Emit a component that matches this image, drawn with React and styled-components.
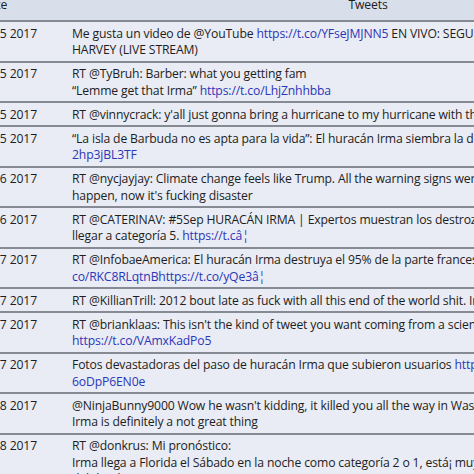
import React from "react";
import styled, { createGlobalStyle } from "styled-components";

const GlobalStyle = createGlobalStyle`
  html, body {
    margin: 0;
    padding: 0;
    background: #e9ecf4;
    overflow: hidden;
  }
`;

const Wrapper = styled.div`
  width: 474px;
  height: 474px;
  overflow: hidden;
  background: #e9ecf4;
  font-family: "Open Sans", "Noto Sans", sans-serif;
  font-size: 12.2px;
  letter-spacing: -0.15px;
  color: #1d1d22;
`;

const Table = styled.table`
  border-collapse: collapse;
  margin-left: -40px;
  margin-top: -3px;
  width: 710px;
  table-layout: fixed;
`;

const HeadRow = styled.tr`
  background: #d9dfea;
  border-bottom: 2px solid #868a93;
`;

const HeadCell = styled.th`
  box-sizing: border-box;
  font-weight: normal;
  line-height: 16px;
  padding: 0 6px 7px;
  padding-left: ${(p) => p.$padLeft || 6}px;
  text-align: ${(p) => p.$align || "center"};
  width: ${(p) => p.$width}px;
  white-space: nowrap;
  overflow: hidden;
`;

const Row = styled.tr`
  border-bottom: 2px solid #868a93;
`;

const DateCell = styled.td`
  vertical-align: top;
  padding: 3.5px 6px 2px 9.5px;
  line-height: 16.5px;
  white-space: nowrap;
  overflow: hidden;
`;

const TweetCell = styled.td`
  vertical-align: top;
  padding: 3.5px 6px 2px;
  line-height: 16.5px;
  white-space: nowrap;
  overflow: hidden;
`;

const Link = styled.span`
  color: #2b36b8;
`;

const rows = [
  {
    date: "Sep 05 2017",
    lines: [
      ["Me gusta un video de @YouTube ", { l: "https://t.co/YFseJMJNN5" }, " EN VIVO: SEGUIMIENTO DEL HURACÁN"],
      ["HARVEY (LIVE STREAM)"],
    ],
  },
  {
    date: "Sep 05 2017",
    lines: [
      ["RT @TyBruh: Barber: what you getting fam"],
      ["“Lemme get that Irma” ", { l: "https://t.co/LhjZnhhbba" }],
    ],
  },
  {
    date: "Sep 05 2017",
    lines: [["RT @vinnycrack: y'all just gonna bring a hurricane to my hurricane with these clouds"]],
  },
  {
    date: "Sep 05 2017",
    lines: [
      ["“La isla de Barbuda no es apta para la vida”: El huracán Irma siembra la destrucción ", { l: "https://t.co/" }],
      [{ l: "2hp3jBL3TF" }],
    ],
  },
  {
    date: "Sep 06 2017",
    lines: [
      ["RT @nycjayjay: Climate change feels like Trump. All the warning signs were there and we let it"],
      ["happen, now it's fucking disaster"],
    ],
  },
  {
    date: "Sep 06 2017",
    lines: [
      ["RT @CATERINAV: #5Sep HURACÁN IRMA | Expertos muestran los destrozos que podría causar al"],
      ["llegar a categoría 5. ", { l: "https://t.câ¦" }],
    ],
  },
  {
    date: "Sep 07 2017",
    lines: [
      ["RT @InfobaeAmerica: El huracán Irma destruya el 95% de la parte francesa de la isla ", { l: "https://t." }],
      [{ l: "co/RKC8RLqtnBhttps://t.co/yQe3â¦" }],
    ],
  },
  {
    date: "Sep 07 2017",
    lines: [["RT @KillianTrill: 2012 bout late as fuck with all this end of the world shit. Irma"]],
  },
  {
    date: "Sep 07 2017",
    lines: [
      ["RT @brianklaas: This isn't the kind of tweet you want coming from a scientist studying"],
      [{ l: "https://t.co/VAmxKadPo5" }],
    ],
  },
  {
    date: "Sep 07 2017",
    lines: [
      ["Fotos devastadoras del paso de huracán Irma que subieron usuarios ", { l: "https://t.co/" }],
      [{ l: "6oDpP6EN0e" }],
    ],
  },
  {
    date: "Sep 08 2017",
    lines: [
      ["@NinjaBunny9000 Wow he wasn't kidding, it killed you all the way in Washington"],
      ["Irma is definitely a not great thing"],
    ],
  },
  {
    date: "Sep 08 2017",
    lines: [
      ["RT @donkrus: Mi pronóstico:"],
      ["Irma llega a Florida el Sábado en la noche como categoría 2 o 1, está¡ muy"],
      ["debilitada"],
    ],
  },
];

const renderLine = (parts) =>
  parts.map((part, i) =>
    typeof part === "string" ? (
      <React.Fragment key={i}>{part}</React.Fragment>
    ) : (
      <Link key={i}>{part.l}</Link>
    )
  );

const App = () => {
  return (
    <Wrapper>
      <GlobalStyle />
      <Table>
        <thead>
          <HeadRow>
            <HeadCell $width={106} $align="left" $padLeft={21}>
              Date
            </HeadCell>
            <HeadCell $width={604}>Tweets</HeadCell>
          </HeadRow>
        </thead>
        <tbody>
          {rows.map((row, i) => (
            <Row key={i}>
              <DateCell>{row.date}</DateCell>
              <TweetCell>
                {row.lines.map((line, j) => (
                  <div key={j}>{renderLine(line)}</div>
                ))}
              </TweetCell>
            </Row>
          ))}
        </tbody>
      </Table>
    </Wrapper>
  );
};

export default App;
